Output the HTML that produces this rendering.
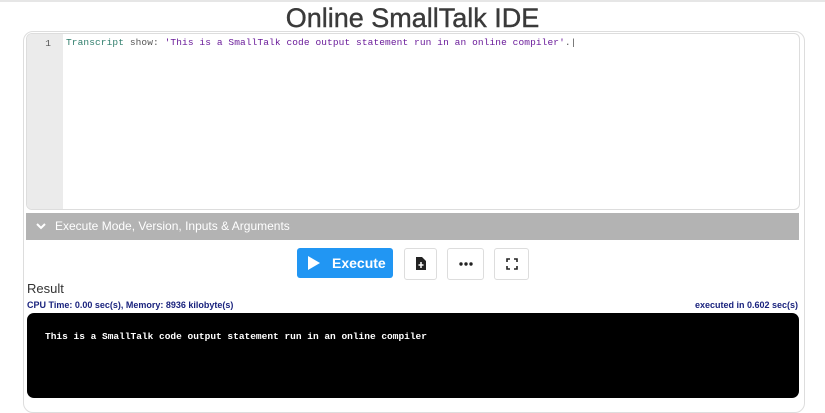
<!DOCTYPE html>
<html><head><style>
body{margin:0;width:825px;height:404px;background:#fff;font-family:"Liberation Sans",sans-serif;overflow:hidden;position:relative}
.top{position:absolute;left:0;top:0;width:825px;height:2px;background:#e6e6e6}
h1{position:absolute;left:0;width:825px;top:2px;margin:0;text-align:center;font-size:27px;font-weight:normal;color:#3a3a3a;line-height:32px;-webkit-text-stroke:0.4px #3a3a3a}
.outer{position:absolute;left:23px;top:31px;width:780px;height:380px;border:1px solid #ddd;border-radius:10px}
.ed{position:absolute;left:26px;top:33px;width:772px;height:175px;border:1px solid #ddd;border-radius:6px;background:#fff;overflow:hidden}
.gut{position:absolute;left:0;top:0;width:36px;height:100%;background:#ebebeb}
.ln{position:absolute;left:0;width:24px;text-align:right;top:4px;font:9.5px "Liberation Mono",monospace;color:#555}
.code{position:absolute;left:39px;top:3px;font:9.5px "Liberation Mono",monospace;color:#555;white-space:pre;letter-spacing:0.1px}
.s{color:#6a1b9a}
.acc{position:absolute;left:26px;top:213px;width:773px;height:27px;background:#b3b3b3;color:#fff;font-size:12px;line-height:27px}
.btn{position:absolute;top:248px;height:30px;border:1px solid #ddd;border-radius:3px;background:#fff}
.ex{position:absolute;left:297px;top:248px;width:96px;height:30px;background:#2196f3;border-radius:3px;color:#fff;font-weight:bold;font-size:14px;line-height:30px}
.res{position:absolute;left:27px;top:281px;font-size:13px;color:#333}
.cpu{position:absolute;top:300px;font-size:9px;font-weight:bold;color:#1a237e}
.out{position:absolute;left:27px;top:313px;width:772px;height:85px;background:#000;border-radius:7px}
.ot{position:absolute;left:18px;top:18px;color:#fff;font:bold 9.5px "Liberation Mono",monospace;white-space:pre}
</style></head><body>
<div class="top"></div>
<h1>Online SmallTalk IDE</h1>
<div class="outer"></div>
<div class="ed"><div class="gut"></div><div class="ln">1</div>
<div class="code"><span style="color:#2e7d6b">Transcript</span> show: <span class="s">'This is a SmallTalk code output statement run in an online compiler'</span>.|</div></div>
<div class="acc"><svg style="position:absolute;left:10px;top:10px" width="10" height="7"><path d="M1 1L5 5L9 1" stroke="#fff" stroke-width="2" fill="none"/></svg><span style="position:absolute;left:29px">Execute Mode, Version, Inputs &amp; Arguments</span></div>
<div class="ex"><svg style="position:absolute;left:11px;top:8px" width="12" height="14"><path d="M0 0L12 7L0 14Z" fill="#fff"/></svg><span style="position:absolute;left:35px">Execute</span></div>
<div class="btn" style="left:404px;width:31px"><svg style="position:absolute;left:11px;top:8px" width="10" height="13"><path d="M0 0H6L10 4V13H0Z" fill="#222"/><path d="M5 5V11M2.5 8H7.5" stroke="#fff" stroke-width="1.5"/></svg></div>
<div class="btn" style="left:447px;width:35px"><svg style="position:absolute;left:11px;top:13px" width="14" height="4"><circle cx="2" cy="2" r="1.7" fill="#222"/><circle cx="7" cy="2" r="1.7" fill="#222"/><circle cx="12" cy="2" r="1.7" fill="#222"/></svg></div>
<div class="btn" style="left:494px;width:33px"><svg style="position:absolute;left:11px;top:9px" width="12" height="12"><path d="M1 4V1H4M8 1H11V4M11 8V11H8M4 11H1V8" stroke="#222" stroke-width="1.6" fill="none"/></svg></div>
<div class="res">Result</div>
<div class="cpu" style="left:27px">CPU Time: 0.00 sec(s), Memory: 8936 kilobyte(s)</div>
<div class="cpu" style="right:27px">executed in 0.602 sec(s)</div>
<div class="out"><div class="ot">This is a SmallTalk code output statement run in an online compiler</div></div>
</body></html>
